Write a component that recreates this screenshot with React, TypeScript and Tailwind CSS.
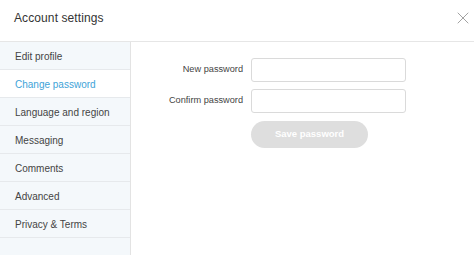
import { X } from "lucide-react";

const menuItems = [
  "Edit profile",
  "Change password",
  "Language and region",
  "Messaging",
  "Comments",
  "Advanced",
  "Privacy & Terms",
];

export default function App() {
  const active = "Change password";

  return (
    <div className="w-[474px] h-[255px] overflow-hidden bg-white font-['Liberation_Sans',Arial,sans-serif] text-[#333]">
      {/* header */}
      <div className="flex h-[42px] items-center justify-between border-b border-[#e6e6e6] pl-[14px] pr-[1px]">
        <h1 className="text-[12px] font-medium tracking-[0.1px] text-[#333] pb-[5px]">Account settings</h1>
        <button className="flex h-[20px] w-[20px] items-center justify-center text-[#999] pb-[5px]">
          <X size={20} strokeWidth={1.1} />
        </button>
      </div>

      <div className="flex h-[213px]">
        {/* sidebar */}
        <div className="w-[131px] shrink-0 border-r border-[#e3e3e3] bg-[#f4f8fb]">
          {menuItems.map((item) => (
            <div
              key={item}
              className={
                item === active
                  ? "flex h-[28px] items-center border-b border-[#e6e9ec] bg-white pl-[15px] pt-[1px] text-[10px] text-[#3ea3d8]"
                  : "flex h-[28px] items-center border-b border-[#e6e9ec] pl-[15px] pt-[1px] text-[10px] text-[#444]"
              }
            >
              {item}
            </div>
          ))}
        </div>

        {/* form */}
        <div className="flex-1 pt-[16px]">
          <div className="flex flex-col gap-[7px]">
            <div className="flex items-center">
              <label className="w-[112px] shrink-0 text-right text-[9.2px] text-[#444]">New password</label>
              <input
                type="password"
                className="ml-[8px] h-[24px] w-[155px] rounded-[3px] border border-[#dadada] bg-white outline-none"
              />
            </div>
            <div className="flex items-center">
              <label className="w-[112px] shrink-0 text-right text-[9.2px] text-[#444]">Confirm password</label>
              <input
                type="password"
                className="ml-[8px] h-[24px] w-[155px] rounded-[3px] border border-[#dadada] bg-white outline-none"
              />
            </div>
            <div className="flex">
              <button
                disabled
                className="ml-[120px] mt-[1px] h-[27px] w-[117px] rounded-full bg-[#dedede] text-[9.5px] font-bold text-white"
              >
                Save password
              </button>
            </div>
          </div>
        </div>
      </div>
    </div>
  );
}
